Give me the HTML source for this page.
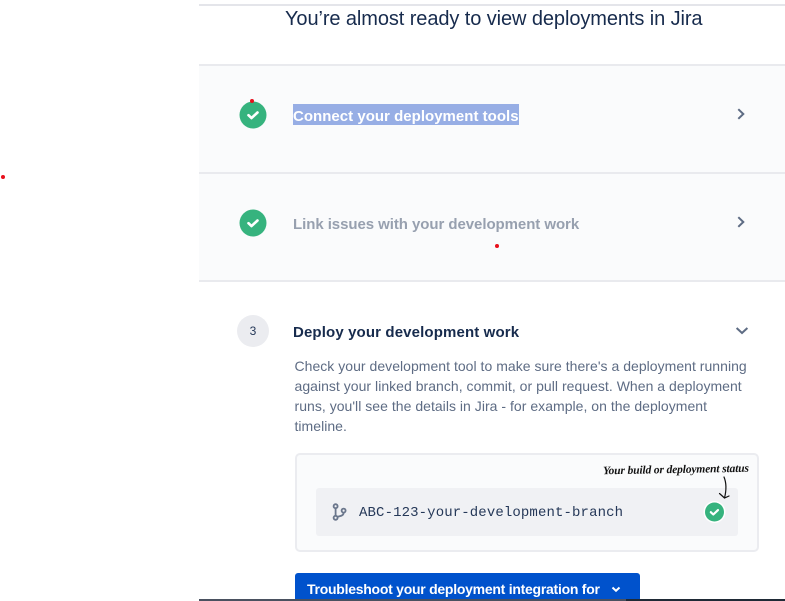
<!DOCTYPE html>
<html lang="en">
<head>
<meta charset="utf-8">
<title>Deployments</title>
<style>
html,body{margin:0;padding:0;background:#fff}
body{position:relative;width:785px;height:601px;overflow:hidden;font-family:"Liberation Sans",sans-serif}
.a{position:absolute;white-space:nowrap}
.l{position:absolute;left:199px;width:586px;background:#e9eaee}
.dot{position:absolute;width:4px;height:4px;border-radius:50%;background:#e8101c}
.p{left:294.5px;font-size:14px;line-height:20px;color:#5e6c84}
</style>
</head>
<body>
<div class="l" style="top:4px;height:2px;background:#e4e5ea"></div>
<div class="a" style="left:285px;top:6px;font-size:20px;line-height:26px;color:#172b4d;letter-spacing:-.09px">You’re almost ready to view deployments in Jira</div>

<div class="a" style="left:199px;top:64px;width:586px;height:217px;background:#fafbfc"></div>
<div class="l" style="top:64px;height:2px"></div>
<div class="l" style="top:172px;height:2px"></div>
<div class="l" style="top:280px;height:2px"></div>

<svg class="a" style="left:239px;top:101px" width="28" height="28" viewBox="0 0 28 28"><circle cx="14" cy="14" r="13.500" fill="#36b37e"/><path d="M9.500 14.200l3 2.900 6-5.600" fill="none" stroke="#fff" stroke-width="2.600" stroke-linecap="round" stroke-linejoin="round"/></svg>
<div class="a" style="left:293px;top:104px;height:21px;line-height:26px;font-size:15px;font-weight:700;color:#fff;background:#97aee5;letter-spacing:.02px;overflow:hidden">Connect your deployment tools</div>
<svg class="a" style="left:733px;top:106px" width="16" height="16" viewBox="0 0 16 16"><path d="M5.300 3.200l5 4.800-5 4.800" fill="none" stroke="#5e6c84" stroke-width="2"/></svg>

<svg class="a" style="left:239px;top:209px" width="28" height="28" viewBox="0 0 28 28"><circle cx="14" cy="14" r="13.500" fill="#36b37e"/><path d="M9.500 14.200l3 2.900 6-5.600" fill="none" stroke="#fff" stroke-width="2.600" stroke-linecap="round" stroke-linejoin="round"/></svg>
<div class="a" style="left:293px;top:214px;line-height:22px;font-size:15px;font-weight:700;color:#97a0af;letter-spacing:-.06px">Link issues with your development work</div>
<svg class="a" style="left:733px;top:214px" width="16" height="16" viewBox="0 0 16 16"><path d="M5.300 3.200l5 4.800-5 4.800" fill="none" stroke="#5e6c84" stroke-width="2"/></svg>

<div class="a" style="left:237px;top:315px;width:32px;height:32px;border-radius:50%;background:#ebecf0;text-align:center;line-height:33px;font-size:12px;color:#253858">3</div>
<div class="a" style="left:293px;top:322px;line-height:22px;font-size:15px;font-weight:700;color:#172b4d;letter-spacing:.13px">Deploy your development work</div>
<svg class="a" style="left:734px;top:323px" width="16" height="16" viewBox="0 0 16 16"><path d="M2.600 5l5.400 5 5.400-5" fill="none" stroke="#5e6c84" stroke-width="2"/></svg>

<div class="a p" style="top:356px;letter-spacing:.03px">Check your development tool to make sure there's a deployment running</div>
<div class="a p" style="top:376px;letter-spacing:.03px">against your linked branch, commit, or pull request. When a deployment</div>
<div class="a p" style="top:396px;letter-spacing:.03px">runs, you'll see the details in Jira - for example, on the deployment</div>
<div class="a p" style="top:416px;letter-spacing:.03px">timeline.</div>

<div class="a" style="left:295px;top:453px;width:460px;height:95px;border:2px solid #ebecf0;border-radius:5px;background:#fafbfc"></div>
<div class="a" style="left:316px;top:488px;width:422px;height:48px;border-radius:3px;background:#f0f1f4"></div>
<svg class="a" style="left:331px;top:503px" width="17" height="18" viewBox="0 0 17 18"><g fill="none" stroke="#6b778c" stroke-width="1.800"><circle cx="4.600" cy="3.200" r="2"/><circle cx="4.600" cy="14.800" r="2"/><circle cx="12.600" cy="7.600" r="2"/><path d="M4.600 5.200v7.600M12.600 9.600c0 3-3 3.600-6.400 4.200"/></g></svg>
<div class="a" style="left:359px;top:503px;font-family:'Liberation Mono',monospace;font-size:14px;line-height:20px;color:#253858;letter-spacing:.12px">ABC-123-your-development-branch</div>

<div class="a" style="left:603px;top:462px;font-family:'Liberation Serif',serif;font-style:italic;font-weight:700;font-size:11.500px;line-height:16px;color:#111;transform:rotate(-1deg);letter-spacing:-.14px">Your build or deployment status</div>
<svg class="a" style="left:717px;top:474px" width="16" height="28" viewBox="0 0 16 28"><path d="M7 3c2.500 6 2.500 13 .5 21M2.500 19.500L7.500 24l4.500-2" fill="none" stroke="#111" stroke-width="1.200" stroke-linecap="round"/></svg>
<svg class="a" style="left:703px;top:500px" width="23" height="24" viewBox="0 0 23 24"><circle cx="11.500" cy="12" r="11" fill="#fff"/><circle cx="11.500" cy="12" r="9.500" fill="#36b37e"/><path d="M7.800 12.200l2.500 2.300 4.700-4.400" fill="none" stroke="#fff" stroke-width="2.200" stroke-linecap="round" stroke-linejoin="round"/></svg>

<div class="a" style="left:295px;top:573px;width:345px;height:28px;border-radius:3px 3px 0 0;background:#0052cc"></div>
<div class="a" style="left:307px;top:579px;font-size:14px;font-weight:700;line-height:20px;color:#fff;letter-spacing:-.26px">Troubleshoot your deployment integration for</div>
<svg class="a" style="left:608px;top:581px" width="16" height="16" viewBox="0 0 16 16"><path d="M4.500 6.500L8 9.800l3.500-3.300" fill="none" stroke="#fff" stroke-width="2"/></svg>

<div class="a" style="left:199px;top:599px;width:427px;height:2px;background:#4a5160"></div>
<div class="a" style="left:626px;top:599px;width:159px;height:2px;background:#1f2a36"></div>

<div class="dot" style="left:250px;top:99px"></div>
<div class="dot" style="left:1px;top:175px"></div>
<div class="dot" style="left:495px;top:244px"></div>
</body>
</html>
